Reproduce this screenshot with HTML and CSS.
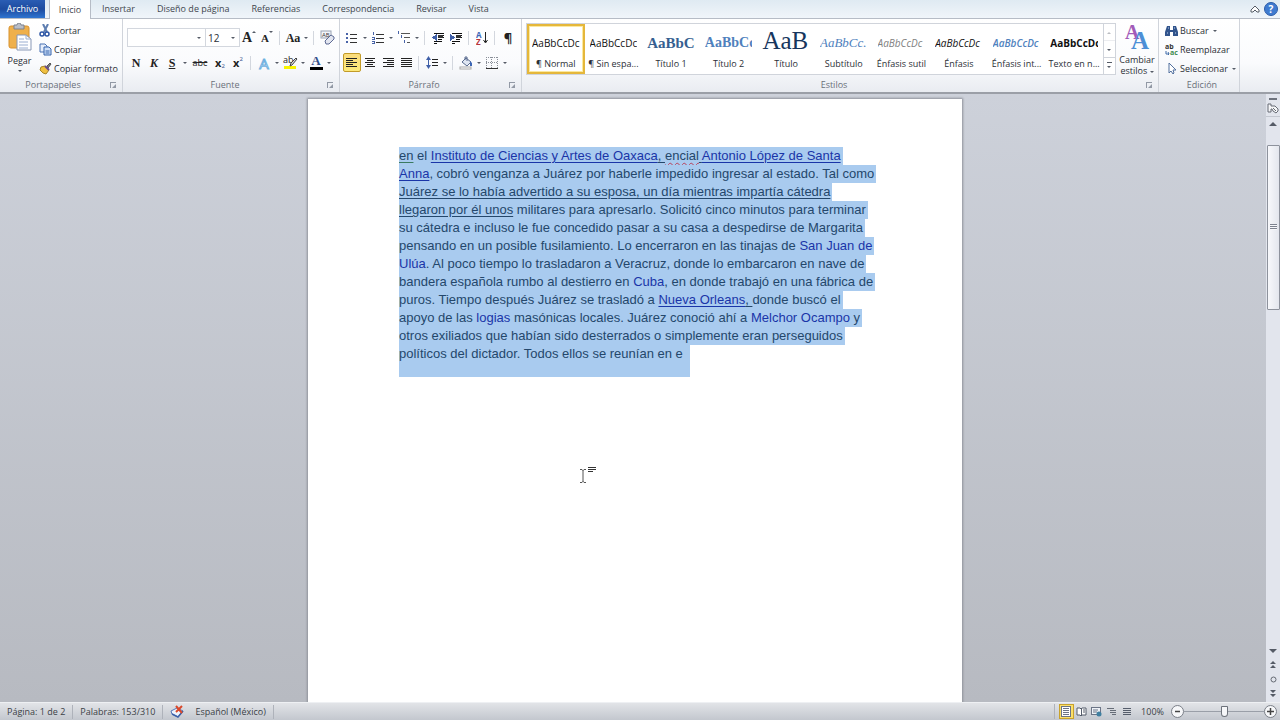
FILE: index.html
```html
<!DOCTYPE html>
<html lang="es">
<head>
    <meta charset="UTF-8">
    <title>Documento</title>
    <link rel="stylesheet" href="styles.css">
</head>
<body>

    <nav class="tabs">
        <button class="tab file-tab">Archivo</button>
        <button class="tab active">Inicio</button>
        <button class="tab">Insertar</button>
        <button class="tab">Diseño de página</button>
        <button class="tab">Referencias</button>
        <button class="tab">Correspondencia</button>
        <button class="tab">Revisar</button>
        <button class="tab">Vista</button>
        <div class="tabs-right">
            <button class="tool" aria-label="Minimizar la cinta"><svg width="10" height="8" viewBox="0 0 10 8"><path d="M1 5 5 1l4 4v2H7L5 5 3 7H1z" fill="#fff" stroke="#555c66"/></svg></button>
            <button class="help" aria-label="Ayuda">?</button>
        </div>
    </nav>

    <div class="ribbon">
        <!-- Portapapeles -->
        <section class="group clipboard">
            <div class="group-body">
                <button class="big-btn paste">
                    <svg width="24" height="28" viewBox="0 0 24 28"><rect x="1" y="3" width="20" height="22" rx="2" fill="#efb04b" stroke="#d8922f"/><path d="M6 2h3a2 2 0 0 1 4 0h3v4H6z" fill="#b9bec8" stroke="#7c828e"/><path d="M9 12h9l5 4v11H9z" fill="#fff" stroke="#8797b5"/><path d="M18 12v4h5M11 16h5M11 19h9M11 22h9M11 25h9" fill="none" stroke="#9aaed0"/></svg>
                    <span>Pegar</span>
                    <i class="arrow"></i>
                </button>
                <div class="stack">
                    <button class="text-btn"><svg width="13" height="13" viewBox="0 0 13 13"><path d="M4 0l4 8M9 0 5 8" stroke="#5e7eb0" stroke-width="2"/><circle cx="3" cy="10" r="2" fill="none" stroke="#2c55a5" stroke-width="1.5"/><circle cx="8" cy="10" r="2" fill="none" stroke="#2c55a5" stroke-width="1.5"/></svg>Cortar</button>
                    <button class="text-btn"><svg width="13" height="13" viewBox="0 0 13 13"><path d="M1 1h5l2 2v6H1z" fill="#e6eefb" stroke="#4a72b4"/><path d="M5 4h5l2 2v6H5z" fill="#cfe0f8" stroke="#3563ab"/><path d="M6.500 8h4M6.500 10h4" stroke="#3563ab"/></svg>Copiar</button>
                    <button class="text-btn"><svg width="13" height="13" viewBox="0 0 13 13"><path d="M8 4l3-3 1 1-3 4z" fill="#7a7f8c" stroke="#555"/><path d="M2 5l4-1 4 4-3 4-3-1-3-3z" fill="#f0c040" stroke="#a6842c"/><path d="M6 4l4 4" stroke="#6b4d8a" stroke-width="2"/></svg>Copiar formato</button>
                </div>
            </div>
            <div class="group-foot"><span>Portapapeles</span><button class="launcher" aria-label="Portapapeles"></button></div>
        </section>

        <!-- Fuente -->
        <section class="group font">
            <div class="group-body rows">
                <div class="row">
                    <label class="combo combo-name"><select aria-label="Fuente"><option></option></select><i class="arrow"></i></label>
                    <label class="combo combo-size"><select aria-label="Tamaño de fuente"><option>12</option></select><i class="arrow"></i></label>
                    <button class="tool serif grow">A<i class="caret up"></i></button>
                    <button class="tool serif shrink">A<i class="caret down"></i></button>
                    <i class="sep"></i>
                    <button class="tool serif case">Aa</button><i class="arrow"></i>
                    <i class="sep"></i>
                    <button class="tool" aria-label="Borrar formato"><svg width="15" height="15" viewBox="0 0 15 15"><rect x="1" y="1" width="10" height="7" fill="#f3f5f9" stroke="#9aa3b3"/><text x="2" y="7" class="svg-small">AB</text><path d="M5 11l6-6 3 2v2l-5 5H6z" fill="#e3e6f0" stroke="#5e6b94"/></svg></button>
                </div>
                <div class="row">
                    <button class="tool serif"><b>N</b></button>
                    <button class="tool serif"><b><em>K</em></b></button>
                    <button class="tool serif"><b><u>S</u></b></button><i class="arrow"></i>
                    <button class="tool wide"><s>abc</s></button>
                    <button class="tool index"><b>x</b><sub>2</sub></button>
                    <button class="tool index"><b>x</b><sup>2</sup></button>
                    <i class="sep"></i>
                    <button class="tool effect">A</button><i class="arrow"></i>
                    <button class="tool" aria-label="Color de resaltado"><svg width="15" height="15" viewBox="0 0 15 15"><rect x="1" y="11" width="12" height="3" fill="#f8f400"/><text x="0" y="8" class="svg-ab">ab</text><path d="M13 3l1 1-5 6-2 1 1-3z" fill="#d8d8d8" stroke="#444"/></svg></button><i class="arrow"></i>
                    <button class="tool serif color">A</button><i class="arrow"></i>
                </div>
            </div>
            <div class="group-foot"><span>Fuente</span><button class="launcher" aria-label="Fuente"></button></div>
        </section>

        <!-- Párrafo -->
        <section class="group paragraph">
            <div class="group-body rows">
                <div class="row">
                    <button class="tool" aria-label="Viñetas"><svg class="crisp" width="12" height="12" viewBox="0 0 12 12"><path d="M0 1h2v2H0zM0 5h2v2H0zM0 9h2v2H0z" fill="#4863a8"/><path d="M4 2h7M4 6h7M4 10h7" stroke="#333"/></svg></button><i class="arrow"></i>
                    <button class="tool" aria-label="Numeración"><svg class="crisp" width="12" height="12" viewBox="0 0 12 12"><path d="M1.500 0v3M0 5h2v2H0M0 9h2v2H0" fill="none" stroke="#4863a8"/><path d="M4 2h8M4 6h8M4 10h8" stroke="#333"/></svg></button><i class="arrow"></i>
                    <button class="tool" aria-label="Lista multinivel"><svg class="crisp" width="14" height="13" viewBox="0 0 14 13"><path d="M1 0v3M4 4v3M7 9v3" stroke="#4863a8"/><path d="M4 2h9M7 6h6M10 11h3" stroke="#555"/></svg></button><i class="arrow"></i>
                    <i class="sep"></i>
                    <button class="tool" aria-label="Disminuir sangría"><svg class="crisp" width="13" height="12" viewBox="0 0 13 12"><path d="M2 1h10M6 3h6M6 5h6M6 7h4M2 9h8M2 11h3" stroke="#111"/><path d="M6 3h5v3H6z" fill="#333"/><path d="M5 2v7L0 5.500z" fill="#3f5fa8"/></svg></button>
                    <button class="tool" aria-label="Aumentar sangría"><svg class="crisp" width="13" height="12" viewBox="0 0 13 12"><path d="M2 1h10M6 3h6M6 5h6M6 7h4M2 9h8M2 11h3" stroke="#111"/><path d="M6 3h5v3H6z" fill="#333"/><path d="M0 2v7l5-3.500z" fill="#3f5fa8"/></svg></button>
                    <i class="sep"></i>
                    <button class="tool" aria-label="Ordenar"><svg width="13" height="14" viewBox="0 0 13 14"><text x="0" y="7" class="svg-sort blue">A</text><text x="0" y="14" class="svg-sort red">Z</text><path d="M9.500 1v10M7.500 9l2 3 2-3" fill="none" stroke="#222"/></svg></button>
                    <i class="sep"></i>
                    <button class="tool pilcrow">¶</button>
                </div>
                <div class="row">
                    <button class="tool pressed" aria-label="Alinear a la izquierda"><svg class="crisp" width="12" height="11" viewBox="0 0 12 11"><path d="M0 1h11M0 3h7M0 5h11M0 7h7M0 9h11" stroke="#222"/></svg></button>
                    <button class="tool" aria-label="Centrar"><svg class="crisp" width="12" height="11" viewBox="0 0 12 11"><path d="M1 1h10M3 3h6M1 5h10M3 7h6M1 9h10" stroke="#222"/></svg></button>
                    <button class="tool" aria-label="Alinear a la derecha"><svg class="crisp" width="12" height="11" viewBox="0 0 12 11"><path d="M1 1h11M5 3h7M1 5h11M5 7h7M1 9h11" stroke="#222"/></svg></button>
                    <button class="tool" aria-label="Justificar"><svg class="crisp" width="12" height="11" viewBox="0 0 12 11"><path d="M1 1h11M1 3h11M1 5h11M1 7h11M1 9h11" stroke="#222"/></svg></button>
                    <i class="sep"></i>
                    <button class="tool" aria-label="Interlineado"><svg width="12" height="13" viewBox="0 0 12 13"><path d="M2.500 0l2.500 4H0zM2.500 13l2.500-4H0z" fill="#3f5fa8"/><path d="M2.500 3v7" stroke="#3f5fa8"/><path class="crisp" d="M6 3h6M6 6h6M6 9h6" stroke="#222"/></svg></button><i class="arrow"></i>
                    <i class="sep"></i>
                    <button class="tool" aria-label="Sombreado"><svg width="14" height="14" viewBox="0 0 14 14"><path d="M3 6l4-4 5 4-4 4z" fill="#dfe6f2" stroke="#596b8e"/><path d="M6 4V1h2v4" fill="none" stroke="#596b8e"/><path d="M11 5l2 2v3h-2z" fill="#3c66b5"/><rect x="1" y="11" width="11" height="2" fill="#fff" stroke="#a8a8a8"/></svg></button><i class="arrow"></i>
                    <button class="tool" aria-label="Bordes"><svg width="12" height="12" viewBox="0 0 12 12"><path d="M.500 0v11M5.500 0v11M11.500 0v11M0 .500h12M0 5.500h12" stroke="#8a8f98" stroke-dasharray="1 1"/><path d="M0 11.500h12" stroke="#333"/></svg></button><i class="arrow"></i>
                </div>
            </div>
            <div class="group-foot"><span>Párrafo</span><button class="launcher" aria-label="Párrafo"></button></div>
        </section>

        <!-- Estilos -->
        <section class="group styles">
            <div class="group-body">
                <div class="gallery">
                    <button class="style selected"><span class="sample">AaBbCcDc</span><span>¶ Normal</span></button>
                    <button class="style"><span class="sample">AaBbCcDc</span><span>¶ Sin espa...</span></button>
                    <button class="style"><span class="sample heading1">AaBbCc</span><span>Título 1</span></button>
                    <button class="style"><span class="sample heading2">AaBbCc</span><span>Título 2</span></button>
                    <button class="style"><span class="sample title">AaB</span><span>Título</span></button>
                    <button class="style"><span class="sample subtitle">AaBbCc.</span><span>Subtítulo</span></button>
                    <button class="style"><span class="sample subtle">AaBbCcDc</span><span>Énfasis sutil</span></button>
                    <button class="style"><span class="sample emphasis">AaBbCcDc</span><span>Énfasis</span></button>
                    <button class="style"><span class="sample intense">AaBbCcDc</span><span>Énfasis int...</span></button>
                    <button class="style"><span class="sample strong">AaBbCcDc</span><span>Texto en n...</span></button>
                    <div class="gallery-nav">
                        <button class="off" aria-label="Fila anterior"><i class="caret up"></i></button>
                        <button aria-label="Fila siguiente"><i class="caret down"></i></button>
                        <button class="more" aria-label="Más"><i class="caret down"></i></button>
                    </div>
                </div>
                <button class="big-btn change">
                    <svg width="26" height="26" viewBox="0 0 26 26"><text x="1" y="15" class="svg-a violet">A</text><text x="7" y="25" class="svg-a-big">A</text></svg>
                    <span>Cambiar<br>estilos <i class="caret down"></i></span>
                </button>
            </div>
            <div class="group-foot"><span>Estilos</span><button class="launcher" aria-label="Estilos"></button></div>
        </section>

        <!-- Edición -->
        <section class="group editing">
            <div class="group-body">
                <div class="stack">
                    <button class="text-btn"><svg width="13" height="12" viewBox="0 0 13 12"><path d="M2 1h3v4h3V1h3l2 6v4H8V7H5v4H0V7z" fill="#31548c"/><path d="M2 8h1M10 8h1M3 3h1M9 3h1" stroke="#b9cdea"/></svg>Buscar<i class="arrow"></i></button>
                    <button class="text-btn"><svg width="13" height="12" viewBox="0 0 13 12"><text x="0" y="5" class="svg-rep">ab</text><text x="5" y="11" class="svg-rep green">ac</text><path d="M1 7v3h3M3 8l1 2-1 1" fill="none" stroke="#3e6aa8"/></svg>Reemplazar</button>
                    <button class="text-btn"><svg width="13" height="13" viewBox="0 0 13 13"><path d="M4 1v10l2-2 2 3 1-1-1-3h3z" fill="#fff" stroke="#53719f"/></svg>Seleccionar<i class="arrow"></i></button>
                </div>
            </div>
            <div class="group-foot"><span>Edición</span></div>
        </section>
    </div>

    <main class="workspace">
        <div class="canvas">
            <article class="page">
                <p class="text">
                    <span><i class="gram">en</i> el <a href="#">Instituto de Ciencias y Artes de Oaxaca</a><u>, </u><i class="spell">encial</i><u> </u><a href="#">Antonio López de Santa</a></span>
                    <span><a href="#">Anna</a>, cobró venganza a Juárez por haberle impedido ingresar al estado. Tal como</span>
                    <span><u>Juárez se lo había advertido a su esposa, un día mientras impartía cátedra</u></span>
                    <span><u>llegaron por él unos</u> militares para apresarlo. Solicitó cinco minutos para terminar</span>
                    <span>su cátedra e incluso le fue concedido pasar a su casa a despedirse de Margarita</span>
                    <span>pensando en un posible fusilamiento. Lo encerraron en las tinajas de <a class="plain" href="#">San Juan de</a></span>
                    <span><a class="plain" href="#">Ulúa</a>. Al poco tiempo lo trasladaron a Veracruz, donde lo embarcaron en nave de</span>
                    <span>bandera española rumbo al destierro en <a class="plain" href="#">Cuba</a>, en donde trabajó en una fábrica de</span>
                    <span>puros. Tiempo después Juárez se trasladó a <a href="#">Nueva Orleans</a><u>, </u>donde buscó el</span>
                    <span>apoyo de las <a class="plain" href="#">logias</a> masónicas locales. Juárez conoció ahí a <a class="plain" href="#">Melchor Ocampo</a> y</span>
                    <span>otros exiliados que habían sido desterrados o simplemente eran perseguidos</span>
                    <span class="last">políticos del dictador. Todos ellos se reunían en e</span>
                </p>
                <svg class="cursor" width="16" height="18" viewBox="0 0 16 18"><path d="M0 3.500h2l1 1 1-1h2M3 4v12M0 16.500h2l1-1 1 1h2" fill="none" stroke="#555"/><path d="M8 1.500h8M8 3.500h8M8 5.500h5" stroke="#333"/></svg>
            </article>
        </div>
        <div class="scrollbar">
            <i class="split"></i>
            <button class="ruler" aria-label="Regla"><svg width="12" height="12" viewBox="0 0 12 12"><path d="M1 2h3v2h4l3 3v2L9 11 6 9l-1-2H4v3H1z" fill="#f6f7f9" stroke="#666b74"/><path d="M6 6l3 3" stroke="#666b74"/></svg></button>
            <button aria-label="Arriba"><i class="caret big up"></i></button>
            <div class="track"><div class="thumb"><i class="grip"></i></div></div>
            <button aria-label="Abajo"><i class="caret big down"></i></button>
            <button aria-label="Página anterior"><svg width="6" height="8" viewBox="0 0 6 8"><path d="M3 0l3 3H0zM3 4l3 3H0z" fill="#555b66"/></svg></button>
            <button aria-label="Seleccionar objeto"><svg width="7" height="7" viewBox="0 0 7 7"><circle cx="3.500" cy="3.500" r="2.500" fill="none" stroke="#666b74"/></svg></button>
            <button aria-label="Página siguiente"><svg width="6" height="8" viewBox="0 0 6 8"><path d="M0 1h6L3 4zM0 5h6L3 8z" fill="#555b66"/></svg></button>
        </div>
    </main>

    <footer class="status">
        <button>Página: 1 de 2</button>
        <button>Palabras: 153/310</button>
        <button class="proof" aria-label="Revisión"><svg width="14" height="13" viewBox="0 0 14 13"><path d="M1 6l6-3 6 3-5 6-6-3z" fill="#eef3fc" stroke="#5376b8"/><path d="M2 9l6 3 5-6" fill="none" stroke="#3d61a8" stroke-width="1.500"/><path d="M6 1l6 7M12 1L6 7" stroke="#d9482b" stroke-width="2"/></svg></button>
        <button class="lang">Español (México)</button>
        <div class="views">
            <button class="on" aria-label="Diseño de impresión"><svg class="crisp" width="11" height="11" viewBox="0 0 11 11"><rect x=".500" y=".500" width="9" height="10" fill="#fff" stroke="#6b7486"/><path d="M2 2.500h6M2 4.500h6M2 6.500h6M2 8.500h6" stroke="#6b7486"/></svg></button>
            <button aria-label="Lectura"><svg width="11" height="10" viewBox="0 0 11 10"><path d="M1 1h3l1 1 1-1h4v7H6L5 9 4 8H1zM5.500 2v7" fill="#fff" stroke="#555d6b"/><path d="M7 3h2M7 5h2" stroke="#555d6b"/></svg></button>
            <button aria-label="Diseño web"><svg width="11" height="10" viewBox="0 0 11 10"><rect x=".500" y=".500" width="9" height="7" fill="#eef2f7" stroke="#6b7486"/><path d="M2 3h5M2 5h4" stroke="#6b7486"/><circle cx="8" cy="7" r="2.500" fill="#3f7fa0"/></svg></button>
            <button aria-label="Esquema"><svg class="crisp" width="10" height="9" viewBox="0 0 10 9"><path d="M0 1.500h7M3 3.500h6M3 5.500h6M5 7.500h4" stroke="#666d78"/></svg></button>
            <button aria-label="Borrador"><svg class="crisp" width="10" height="9" viewBox="0 0 10 9"><path d="M1 1.500h8M1 3.500h8M1 5.500h8M1 7.500h8" stroke="#555d6b"/></svg></button>
        </div>
        <button class="percent">100%</button>
        <button class="round" aria-label="Alejar"><svg width="7" height="7" viewBox="0 0 7 7"><path d="M1 3.500h5" stroke="#444" stroke-width="1.500"/></svg></button>
        <input class="zoom" type="range" min="0" max="100" value="50" aria-label="Zoom">
        <button class="round" aria-label="Acercar"><svg width="7" height="7" viewBox="0 0 7 7"><path d="M0 3.500h7M3.500 0v7" stroke="#444" stroke-width="1.500"/></svg></button>
    </footer>

</body>
</html>
```

FILE: styles.css
```css
* {
    box-sizing: border-box;
}
body {
    margin: 0;
    height: 100vh;
    display: flex;
    flex-direction: column;
    overflow: hidden;
    font-family: "Open Sans", "Noto Sans", sans-serif;
    font-size: 9px;
    line-height: 12px;
    color: #2b2f36;
}
button {
    margin: 0;
    padding: 0;
    border: 0;
    background: none;
    font: inherit;
    color: inherit;
}
svg {
    display: block;
    flex: none;
}
.crisp {
    shape-rendering: crispEdges;
}

/* tabs */
.tabs {
    display: flex;
    height: 19px;
    background: linear-gradient(#dfeaf2, #f0f5fa);
    border-bottom: 1px solid #b6bcc6;
}
.tab {
    height: 18px;
    padding: 0 11px;
    color: #41464e;
}
.tab.file-tab {
    width: 45px;
    padding: 0;
    margin-right: 4px;
    color: #fff;
    background: linear-gradient(#2a5db4, #1d4b9f 50%, #2f74d0);
}
.tab.active {
    height: 19px;
    width: 42px;
    padding: 0;
    background: #fff;
    border: 1px solid #b6bcc6;
    border-width: 0 1px;
}
.tabs-right {
    display: flex;
    align-items: center;
    margin-left: auto;
    padding-right: 2px;
}
.help {
    width: 14px;
    height: 14px;
    border-radius: 50%;
    border: 1px solid #2b5ca8;
    background: #3f7bd0;
    color: #fff;
    font-weight: bold;
    font-size: 10px;
    line-height: 12px;
}

/* ribbon */
.ribbon {
    display: flex;
    height: 75px;
    background: linear-gradient(#fff, #fafbfd 60%, #e9ecf1);
    border-bottom: 2px solid #9b9fa7;
}
.group {
    display: flex;
    flex: none;
    flex-direction: column;
    border-right: 1px solid #d0d4db;
}
.group-body {
    display: flex;
    flex: 1;
}
.group-foot {
    display: flex;
    align-items: center;
    height: 14px;
    color: #6a707a;
}
.group-foot span {
    flex: 1;
    text-align: center;
}
.launcher {
    position: relative;
    width: 16px;
    height: 8px;
}
.launcher::before {
    content: "";
    display: block;
    width: 5px;
    height: 5px;
    margin-left: 4px;
    border: 1px solid #9299a5;
    border-width: 1px 0 0 1px;
}
.launcher::after {
    content: "";
    position: absolute;
    left: 6px;
    top: 3px;
    border: 2px solid #9299a5;
    border-top-color: transparent;
    border-left-color: transparent;
}
.clipboard {
    width: 123px;
}
.font {
    width: 217px;
    padding-left: 4px;
}
.paragraph {
    width: 182px;
    padding-left: 3px;
}
.styles {
    flex: 1;
    min-width: 0;
    padding-left: 4px;
}
.editing {
    width: 81px;
    margin-right: 40px;
    padding-left: 6px;
}
.big-btn {
    display: flex;
    flex-direction: column;
    align-items: center;
    line-height: 11px;
}
.paste {
    width: 39px;
    padding-top: 4px;
    gap: 4px;
}
.change {
    width: 42px;
    padding-top: 5px;
    gap: 4px;
    white-space: nowrap;
}
.stack {
    display: flex;
    flex-direction: column;
    align-items: flex-start;
    padding-top: 2px;
}
.text-btn {
    display: flex;
    align-items: center;
    gap: 2px;
    height: 19px;
    white-space: nowrap;
}
.rows {
    flex-direction: column;
    gap: 6px;
    padding-top: 9px;
}
.row {
    display: flex;
    align-items: center;
    height: 19px;
}
.tool {
    display: flex;
    flex: none;
    align-items: center;
    justify-content: center;
    width: 18px;
    height: 19px;
    color: #222;
}
.tool.wide {
    width: 22px;
}
.tool.pressed {
    border: 1px solid #c29b29;
    border-radius: 2px;
    background: linear-gradient(#fbdc7c, #fce97a);
}
.serif {
    font-family: "Liberation Serif", serif;
    font-size: 12px;
}
.grow,
.case,
.color {
    font-weight: bold;
}
.grow {
    font-size: 14px;
}
.grow .caret,
.shrink .caret {
    align-self: flex-start;
    margin-top: 3px;
}
.shrink {
    font-weight: bold;
    font-size: 11px;
}
.index {
    font-size: 11px;
}
.effect {
    font-size: 15px;
    color: #fff;
    -webkit-text-stroke: 1px #6fb1e0;
}
.color {
    height: 14px;
    line-height: 10px;
    font-size: 13px;
    color: #34508a;
    background: linear-gradient(#000, #000) center bottom / 13px 3px no-repeat;
    align-items: flex-start;
}
.pilcrow {
    font-size: 13px;
    font-weight: bold;
}
sub,
sup {
    font-size: 6px;
    line-height: 6px;
    color: #34508a;
}
sub {
    align-self: flex-end;
    margin-bottom: 3px;
}
sup {
    align-self: flex-start;
    margin-top: 3px;
}
.sep {
    width: 1px;
    height: 14px;
    margin: 0 4px 0 3px;
    background: #d3d7de;
}
.caret,
.arrow::before {
    border: 2px solid transparent;
    border-bottom-width: 0;
    border-top-color: #555b66;
}
.arrow {
    display: flex;
    flex: none;
    justify-content: center;
    width: 8px;
}
.arrow::before {
    content: "";
}
.caret {
    display: inline-block;
    vertical-align: middle;
}
.caret.big {
    border-width: 4px 4px 0;
}
.caret.up {
    border-top-width: 0;
    border-bottom: 2px solid #555b66;
}
.caret.big.up {
    border-bottom-width: 4px;
}
.combo {
    display: flex;
    align-items: center;
    height: 19px;
    padding-right: 2px;
    border: 1px solid #d3d7de;
    background: #fff;
}
.combo-name {
    width: 79px;
}
.combo-size {
    width: 34px;
    border-left: 0;
}
.combo select {
    flex: 1;
    min-width: 0;
    padding: 0 2px;
    border: 0;
    background: none;
    appearance: none;
    font: inherit;
    font-size: 10px;
    color: inherit;
}

/* style gallery */
.gallery {
    display: flex;
    flex: 1;
    min-width: 0;
    height: 52px;
    margin-top: 4px;
    border: 1px solid #d0d4db;
    background: #fff;
}
.style {
    display: flex;
    flex: 1 1 0;
    flex-direction: column;
    align-items: center;
    min-width: 0;
    padding: 0 3px;
    border: 2px solid transparent;
    white-space: nowrap;
}
.style.selected {
    border-color: #e5b73b;
    box-shadow: inset 0 0 0 1px #fbe9a0;
}
.sample {
    width: 100%;
    height: 32px;
    overflow: hidden;
    text-align: left;
    font-size: 10px;
    line-height: 34px;
    color: #111;
}
.heading1,
.heading2,
.title,
.subtitle {
    font-family: "Liberation Serif", serif;
}
.heading1 {
    font-size: 15px;
    font-weight: bold;
    color: #365f91;
}
.heading2 {
    font-size: 14px;
    font-weight: bold;
    color: #4f81bd;
}
.title {
    font-size: 25px;
    line-height: 30px;
    color: #17365d;
}
.subtitle {
    font-size: 13px;
    font-style: italic;
    color: #4f81bd;
}
.subtle {
    font-style: italic;
    color: #808080;
}
.emphasis {
    font-style: italic;
}
.intense {
    font-style: italic;
    font-weight: 600;
    color: #4f81bd;
}
.strong {
    font-weight: bold;
}
.gallery-nav {
    display: flex;
    flex: none;
    flex-direction: column;
    width: 12px;
    border-left: 1px solid #d0d4db;
}
.gallery-nav button {
    flex: 1;
    line-height: 8px;
    border-bottom: 1px solid #d0d4db;
}
.gallery-nav button:last-child {
    border-bottom: 0;
}
.gallery-nav .off {
    opacity: 0.4;
}
.more::before {
    content: "";
    display: block;
    width: 5px;
    height: 1px;
    margin: 0 auto;
    background: #555b66;
}

/* letters inside icons */
.svg-small {
    font-size: 6px;
    fill: #333;
}
.svg-ab {
    font-size: 9px;
    fill: #222;
}
.svg-sort {
    font-size: 8px;
    font-weight: bold;
}
.svg-rep {
    font-size: 7px;
    font-weight: bold;
    fill: #333;
}
.blue {
    fill: #3f68b8;
}
.red {
    fill: #b8343c;
}
.green {
    fill: #3d8b4f;
}
.svg-a,
.svg-a-big {
    font-family: "Liberation Serif", serif;
    font-weight: bold;
}
.svg-a {
    font-size: 20px;
}
.violet {
    fill: #a25bb8;
}
.svg-a-big {
    font-size: 25px;
    fill: #4d8fd6;
}

/* document area */
.workspace {
    display: flex;
    flex: 1;
    min-height: 0;
}
.canvas {
    flex: 1;
    padding-top: 5px;
    padding-left: 4px;
    overflow: hidden;
    background: linear-gradient(#cdd1da, #b7bac1);
}
.page {
    position: relative;
    width: 654px;
    height: 100%;
    margin: 0 auto;
    padding: 48px 91px 0;
    background: #fff;
    box-shadow: 0 0 2px 1px #8e929a;
}
.text {
    display: flex;
    flex-direction: column;
    align-items: flex-start;
    margin: 0;
    font-family: "Liberation Sans", Arial, sans-serif;
    font-size: 13px;
    line-height: 18px;
    white-space: nowrap;
    color: #24476b;
}
.text > span {
    padding-right: 2px;
    background: #a9cbef;
}
.text .last {
    padding-right: 7px;
    padding-bottom: 14px;
}
.text a {
    color: #1a35a8;
}
.text a.plain {
    text-decoration: none;
}
.text u,
.text a {
    text-underline-offset: 2px;
}
.gram,
.spell {
    font-style: normal;
    text-decoration: underline #3a7a60;
    text-underline-offset: 2px;
}
.spell {
    text-decoration: underline wavy #b8405a 1px;
}
.cursor {
    position: absolute;
    left: 272px;
    top: 367px;
}

/* scroll bar */
.scrollbar {
    display: flex;
    flex-direction: column;
    align-items: center;
    width: 14px;
    padding: 4px 0 2px;
    background: #e2e5ed;
}
.scrollbar button {
    display: flex;
    align-items: center;
    justify-content: center;
    width: 14px;
    height: 14px;
}
.split {
    width: 8px;
    height: 2px;
    background: #6e737d;
}
.scrollbar .ruler {
    height: 17px;
    border-bottom: 1px solid #c3c7d0;
}
.track {
    flex: 1;
    width: 13px;
    padding-top: 14px;
}
.thumb {
    display: flex;
    align-items: center;
    justify-content: center;
    height: 33%;
    border: 1px solid #8d929c;
    border-radius: 1px;
    background: linear-gradient(90deg, #f7f8fb, #e3e6ed);
}
.grip {
    width: 7px;
    height: 6px;
    background: repeating-linear-gradient(#7d838f 0 1px, #f7f8fb 1px 2px);
}

/* status bar */
.status {
    display: flex;
    align-items: center;
    height: 18px;
    padding: 0 3px 0 0;
    border-top: 1px solid #eef0f3;
    background: linear-gradient(#e2e4e8, #c3c7ce);
    color: #3b3f46;
}
.status > button {
    height: 14px;
    padding: 0 7px;
    border-right: 1px solid #aeb2ba;
}
.status .proof {
    padding-right: 4px;
    border-right: 0;
}
.views {
    display: flex;
    margin-left: auto;
    padding-left: 4px;
    border-left: 1px solid #aeb2ba;
}
.views button {
    display: flex;
    align-items: center;
    justify-content: center;
    width: 15px;
    height: 15px;
}
.views .on {
    border: 1px solid #c9a22c;
    background: #fbe06a;
}
.status .percent {
    border-right: 0;
}
.status .round {
    display: flex;
    align-items: center;
    justify-content: center;
    width: 13px;
    height: 13px;
    padding: 0;
    border: 1px solid #7a7f88;
    border-radius: 50%;
    background: #f6f7f9;
}
.zoom {
    width: 80px;
    height: 14px;
    margin: 0;
    appearance: none;
    background: linear-gradient(#9a9fa8, #9a9fa8) center / 100% 1px no-repeat;
}
.zoom::-webkit-slider-thumb {
    appearance: none;
    width: 7px;
    height: 11px;
    border: 1px solid #6d727b;
    border-radius: 1px 1px 4px 4px;
    background: #f6f7f9;
}
```
